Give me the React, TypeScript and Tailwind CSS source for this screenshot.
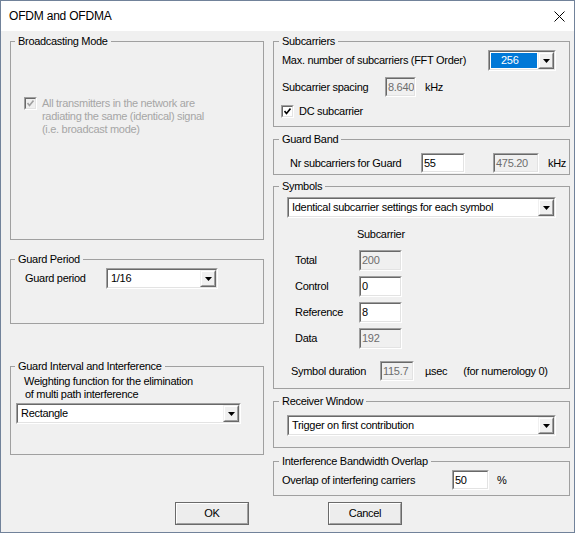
import React from "react";

const sunkenOuter =
  "border border-t-[#a0a0a0] border-l-[#a0a0a0] border-r-white border-b-white";
const sunkenInner =
  "border border-t-[#696969] border-l-[#696969] border-r-[#e3e3e3] border-b-[#e3e3e3]";

const Arrow = () => (
  <svg width="7" height="4" viewBox="0 0 7 4">
    <polygon points="0,0 7,0 3.5,4" fill="#000" />
  </svg>
);

const Combo = ({
  size,
  value,
  selected = false,
}: {
  size: string;
  value: string;
  selected?: boolean;
}) => (
  <div className={`${size} flex ${sunkenOuter}`}>
    <div className={`flex-1 flex min-w-0 bg-white ${sunkenInner}`}>
      <div className="flex-1 flex min-w-0 p-[1px]">
        <div
          className={
            selected
              ? "flex-1 flex items-center pl-[10px] bg-[#0078d7] text-white"
              : "flex-1 flex items-center pl-[2px] whitespace-nowrap overflow-hidden"
          }
        >
          {value}
        </div>
      </div>
      <div className="w-[16px] flex border border-t-[#f0f0f0] border-l-[#f0f0f0] border-r-[#696969] border-b-[#696969]">
        <div className="flex-1 flex items-center justify-center bg-[#f0f0f0] border border-t-white border-l-white border-r-[#a0a0a0] border-b-[#a0a0a0]">
          <Arrow />
        </div>
      </div>
    </div>
  </div>
);

const Field = ({
  size,
  value,
  disabled = false,
}: {
  size: string;
  value: string;
  disabled?: boolean;
}) => (
  <div className={`${size} flex ${sunkenOuter}`}>
    <div
      className={`flex-1 flex items-center pl-[1px] overflow-hidden whitespace-nowrap ${sunkenInner} ${
        disabled ? "bg-[#f0f0f0] text-[#6d6d6d]" : "bg-white text-black"
      }`}
    >
      {value}
    </div>
  </div>
);

const Check = ({ disabled = false }: { disabled?: boolean }) => (
  <div className={`w-[13px] h-[13px] flex shrink-0 ${sunkenOuter}`}>
    <div
      className={`flex-1 flex items-center justify-center ${sunkenInner} ${
        disabled ? "bg-[#f0f0f0]" : "bg-white"
      }`}
    >
      <svg width="7" height="7" viewBox="0 0 7 7">
        <polyline
          points="0.5,3 2.5,5.5 6.5,0.5"
          fill="none"
          stroke={disabled ? "#a0a0a0" : "#000"}
          strokeWidth="1.6"
        />
      </svg>
    </div>
  </div>
);

const Group = ({
  title,
  size,
  right = false,
  children,
}: {
  title: string;
  size: string;
  right?: boolean;
  children: React.ReactNode;
}) => (
  <fieldset className={`${size} border border-[#a0a0a0] min-w-0`}>
    <legend
      className={`${right ? "ml-[5px]" : "ml-[4px]"} px-[3px] leading-[13px]`}
    >
      {title}
    </legend>
    {children}
  </fieldset>
);

const Button = ({ label }: { label: string }) => (
  <div className="w-[74px] h-[23px] flex border border-[#6a6a6a]">
    <div className="flex-1 flex items-center justify-center bg-[#ededed] border border-t-white border-l-white border-r-[#a0a0a0] border-b-[#a0a0a0]">
      {label}
    </div>
  </div>
);

export default function App() {
  return (
    <div className="w-[575px] h-[533px] flex flex-col border border-[#71829a] bg-[#f0f0f0] text-black text-[11px] leading-[13px] tracking-[-0.3px] font-['Liberation_Sans',Arial,sans-serif]">
      <div className="h-[30px] flex items-center justify-between bg-white pl-[8px] pr-[9px] text-[12px] tracking-[-0.2px]">
        <span>OFDM and OFDMA</span>
        <svg width="11" height="11" viewBox="0 0 11 11">
          <path d="M0.5 0.5 L10.5 10.5 M10.5 0.5 L0.5 10.5" stroke="#000" strokeWidth="1" />
        </svg>
      </div>

      <div className="flex gap-[9px] pl-[9px] pt-[4px]">
        {/* left column */}
        <div className="w-[254px] flex flex-col">
          <Group title="Broadcasting Mode" size="h-[205px]">
            <div className="flex mt-[49px] ml-[13px] text-[#a6a6a6]">
              <Check disabled />
              <div className="ml-[5px]">
                All transmitters in the network are
                <br />
                radiating the same (identical) signal
                <br />
                (i.e. broadcast mode)
              </div>
            </div>
          </Group>

          <div className="mt-[13px]">
            <Group title="Guard Period" size="h-[71px]">
              <div className="flex items-center mt-[2px] ml-[14px]">
                <span className="w-[81px]">Guard period</span>
                <Combo size="w-[112px] h-[21px]" value="1/16" />
              </div>
            </Group>
          </div>

          <div className="mt-[36px]">
            <Group title="Guard Interval and Interference" size="h-[95px]">
              <div className="mt-[2px] ml-[13px]">
                Weighting function for the elimination
                <br />
                <span className="ml-[1px]">of multi path interference</span>
              </div>
              <div className="mt-[2px] ml-[5px]">
                <Combo size="w-[225px] h-[21px]" value="Rectangle" />
              </div>
            </Group>
          </div>
        </div>

        {/* right column */}
        <div className="w-[297px] flex flex-col">
          <Group title="Subcarriers" size="h-[92px]" right>
            <div className="flex items-center mt-[2px] ml-[8px]">
              <span className="w-[206px]">Max. number of subcarriers (FFT Order)</span>
              <Combo size="w-[68px] h-[21px]" value="256" selected />
            </div>
            <div className="flex items-center mt-[6px] ml-[8px]">
              <span className="w-[103px]">Subcarrier spacing</span>
              <Field size="w-[31px] h-[20px]" value="8.640" disabled />
              <span className="ml-[9px]">kHz</span>
            </div>
            <div className="flex items-center mt-[8px] ml-[7px]">
              <Check />
              <span className="ml-[5px]">DC subcarrier</span>
            </div>
          </Group>

          <div className="mt-[6px]">
            <Group title="Guard Band" size="h-[42px]" right>
              <div className="flex items-center mt-[7px] ml-[16px]">
                <span className="w-[131px]">Nr subcarriers for Guard</span>
                <Field size="w-[44px] h-[20px]" value="55" />
                <div className="ml-[28px]">
                  <Field size="w-[46px] h-[20px]" value="475.20" disabled />
                </div>
                <span className="ml-[9px]">kHz</span>
              </div>
            </Group>
          </div>

          <div className="mt-[5px]">
            <Group title="Symbols" size="h-[209px]" right>
              <div className="mt-[4px] ml-[13px]">
                <Combo
                  size="w-[269px] h-[21px]"
                  value="Identical subcarrier settings for each symbol"
                />
              </div>
              <div className="mt-[10px] ml-[83px]">Subcarrier</div>
              <div className="flex flex-col gap-[5px] mt-[9px] ml-[21px]">
                {[
                  ["Total", "200", true],
                  ["Control", "0", false],
                  ["Reference", "8", false],
                  ["Data", "192", true],
                ].map(([label, value, disabled]) => (
                  <div key={label as string} className="flex items-center">
                    <span className="w-[64px]">{label as string}</span>
                    <Field
                      size="w-[43px] h-[21px]"
                      value={value as string}
                      disabled={disabled as boolean}
                    />
                  </div>
                ))}
              </div>
              <div className="flex items-center mt-[12px] ml-[17px]">
                <span className="w-[89px]">Symbol duration</span>
                <Field size="w-[34px] h-[20px]" value="115.7" disabled />
                <span className="ml-[11px]">µsec</span>
                <span className="ml-[16px]">(for numerology 0)</span>
              </div>
            </Group>
          </div>

          <div className="mt-[6px]">
            <Group title="Receiver Window" size="h-[53px]" right>
              <div className="mt-[7px] ml-[13px]">
                <Combo size="w-[269px] h-[21px]" value="Trigger on first contribution" />
              </div>
            </Group>
          </div>

          <div className="mt-[7px]">
            <Group title="Interference Bandwidth Overlap" size="h-[41px]" right>
              <div className="flex items-center mt-[2px] ml-[8px]">
                <span className="w-[170px]">Overlap of interfering carriers</span>
                <Field size="w-[37px] h-[20px]" value="50" />
                <span className="ml-[8px]">%</span>
              </div>
            </Group>
          </div>
        </div>
      </div>

      <div className="flex gap-[79px] pl-[174px] mt-[6px]">
        <Button label="OK" />
        <Button label="Cancel" />
      </div>
    </div>
  );
}
